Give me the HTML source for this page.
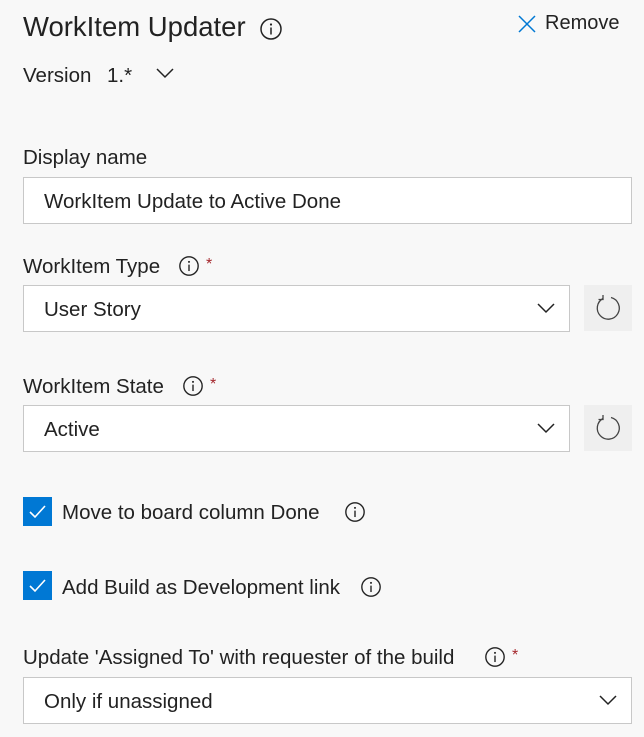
<!DOCTYPE html>
<html><head><style>
body{margin:0;width:644px;height:737px;background:#f8f8f8;font-family:"Liberation Sans",sans-serif;color:#222;position:relative;overflow:hidden}
.a{position:absolute;white-space:nowrap}
.lbl{font-size:20.5px}
.box{position:absolute;background:#fff;border:1px solid #c8c8c8;box-sizing:border-box;font-size:20.5px;padding-left:20px;padding-top:3px;display:flex;align-items:center}
.rf{position:absolute;width:48px;height:46px;background:#efefef}
.cb{position:absolute;width:29px;height:29px;background:#0078d4}
.req{color:#a4262c;font-size:16px}
</style></head><body>
<div class="a" style="left:23px;top:11px;font-size:27.5px">WorkItem Updater</div>
<svg class="a" style="left:259px;top:17px" width="24" height="24" viewBox="0 0 24 24"><circle cx="12" cy="12" r="10" fill="none" stroke="#222" stroke-width="1.5"/><circle cx="12" cy="7.5" r="1.1" fill="#222"/><path d="M12 10.5v7" stroke="#222" stroke-width="1.5"/></svg>
<svg class="a" style="left:518px;top:15px" width="18" height="18" viewBox="0 0 18 18"><path d="M1 1L17 17M17 1L1 17" stroke="#0078d4" stroke-width="1.5"/></svg>
<div class="a" style="left:545px;top:12px;font-size:20px">Remove</div>
<div class="a lbl" style="left:23px;top:64px">Version</div>
<div class="a lbl" style="left:107px;top:64px">1.*</div>
<svg class="a" style="left:156px;top:67px" width="18" height="12" viewBox="0 0 18 12"><path d="M1 2l8 8 8-8" fill="none" stroke="#222" stroke-width="1.5"/></svg>
<div class="a lbl" style="left:23px;top:146px">Display name</div>
<div class="box" style="left:23px;top:177px;width:609px;height:47px">WorkItem Update to Active Done</div>
<div class="a lbl" style="left:23px;top:255px">WorkItem Type</div>
<svg class="a" style="left:178px;top:255px" width="22" height="22" viewBox="0 0 24 24"><circle cx="12" cy="12" r="10" fill="none" stroke="#222" stroke-width="1.5"/><circle cx="12" cy="7.5" r="1.1" fill="#222"/><path d="M12 10.5v7" stroke="#222" stroke-width="1.5"/></svg>
<div class="a req" style="left:206px;top:256px">*</div>
<div class="box" style="left:23px;top:285px;width:547px;height:47px">User Story</div>
<svg class="a" style="left:537px;top:302px" width="18" height="12" viewBox="0 0 18 12"><path d="M1 2l8 8 8-8" fill="none" stroke="#222" stroke-width="1.5"/></svg>
<div class="rf" style="left:584px;top:285px"></div>
<svg class="a" style="left:594px;top:294px" width="28" height="28" viewBox="0 0 28 28"><path d="M9 4.5A11 11 0 1 0 17 3.5" fill="none" stroke="#444" stroke-width="1.3"/><path d="M9 1v4.5H4.5" fill="none" stroke="#444" stroke-width="1.3"/></svg>
<div class="a lbl" style="left:23px;top:375px">WorkItem State</div>
<svg class="a" style="left:182px;top:375px" width="22" height="22" viewBox="0 0 24 24"><circle cx="12" cy="12" r="10" fill="none" stroke="#222" stroke-width="1.5"/><circle cx="12" cy="7.5" r="1.1" fill="#222"/><path d="M12 10.5v7" stroke="#222" stroke-width="1.5"/></svg>
<div class="a req" style="left:210px;top:376px">*</div>
<div class="box" style="left:23px;top:405px;width:547px;height:47px">Active</div>
<svg class="a" style="left:537px;top:422px" width="18" height="12" viewBox="0 0 18 12"><path d="M1 2l8 8 8-8" fill="none" stroke="#222" stroke-width="1.5"/></svg>
<div class="rf" style="left:584px;top:405px"></div>
<svg class="a" style="left:594px;top:414px" width="28" height="28" viewBox="0 0 28 28"><path d="M9 4.5A11 11 0 1 0 17 3.5" fill="none" stroke="#444" stroke-width="1.3"/><path d="M9 1v4.5H4.5" fill="none" stroke="#444" stroke-width="1.3"/></svg>
<div class="cb" style="left:23px;top:497px"></div>
<svg class="a" style="left:27px;top:502px" width="21" height="19" viewBox="0 0 21 19"><path d="M3 10l5 5L18 4" fill="none" stroke="#fff" stroke-width="1.6"/></svg>
<div class="a lbl" style="left:62px;top:501px">Move to board column Done</div>
<svg class="a" style="left:344px;top:501px" width="22" height="22" viewBox="0 0 24 24"><circle cx="12" cy="12" r="10" fill="none" stroke="#222" stroke-width="1.5"/><circle cx="12" cy="7.5" r="1.1" fill="#222"/><path d="M12 10.5v7" stroke="#222" stroke-width="1.5"/></svg>
<div class="cb" style="left:23px;top:571px"></div>
<svg class="a" style="left:27px;top:576px" width="21" height="19" viewBox="0 0 21 19"><path d="M3 10l5 5L18 4" fill="none" stroke="#fff" stroke-width="1.6"/></svg>
<div class="a lbl" style="left:62px;top:576px">Add Build as Development link</div>
<svg class="a" style="left:360px;top:576px" width="22" height="22" viewBox="0 0 24 24"><circle cx="12" cy="12" r="10" fill="none" stroke="#222" stroke-width="1.5"/><circle cx="12" cy="7.5" r="1.1" fill="#222"/><path d="M12 10.5v7" stroke="#222" stroke-width="1.5"/></svg>
<div class="a lbl" style="left:23px;top:646px">Update 'Assigned To' with requester of the build</div>
<svg class="a" style="left:484px;top:646px" width="22" height="22" viewBox="0 0 24 24"><circle cx="12" cy="12" r="10" fill="none" stroke="#222" stroke-width="1.5"/><circle cx="12" cy="7.5" r="1.1" fill="#222"/><path d="M12 10.5v7" stroke="#222" stroke-width="1.5"/></svg>
<div class="a req" style="left:512px;top:647px">*</div>
<div class="box" style="left:23px;top:677px;width:609px;height:47px">Only if unassigned</div>
<svg class="a" style="left:599px;top:694px" width="18" height="12" viewBox="0 0 18 12"><path d="M1 2l8 8 8-8" fill="none" stroke="#222" stroke-width="1.5"/></svg>
</body></html>
